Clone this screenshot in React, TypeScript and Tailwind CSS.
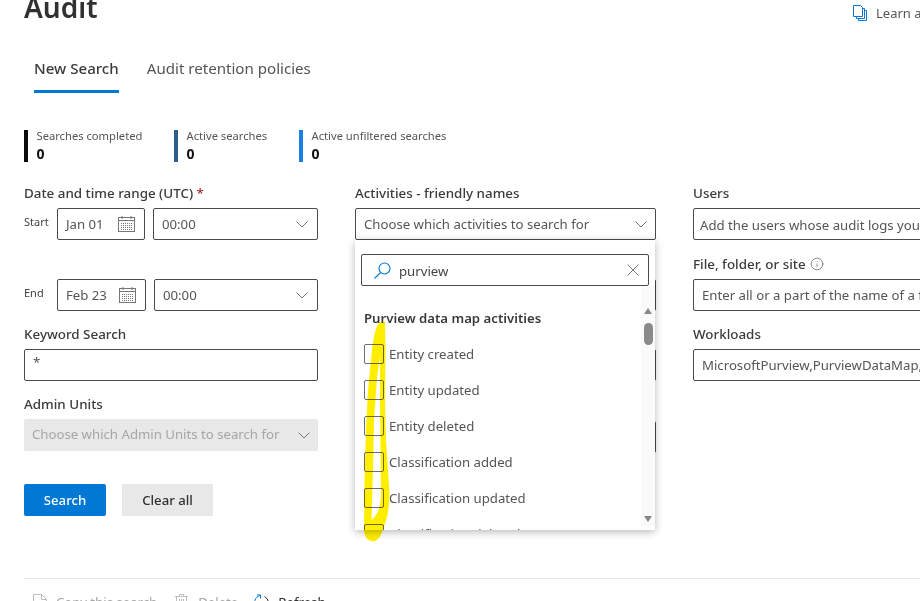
import { Info } from "lucide-react"

const FONT = "font-['Noto_Sans','Open_Sans',sans-serif]"

const ACTIVITIES = [
  "Entity created",
  "Entity updated",
  "Entity deleted",
  "Classification added",
  "Classification updated",
  "Classification deleted",
]

const STATS = [
  { label: "Searches completed", bar: "bg-[#0b0b0b]", width: "w-[150px]" },
  { label: "Active searches", bar: "bg-[#2f5d8c]", width: "w-[125px]" },
  { label: "Active unfiltered searches", bar: "bg-[#1a7fe8]", width: "w-[160px]" },
]

function Chevron() {
  return (
    <svg width="12" height="7" viewBox="0 0 12 7" fill="none" stroke="#777" strokeWidth="1" className="shrink-0">
      <path d="M0.5 0.5L6 6L11.500 0.500" />
    </svg>
  )
}

function CalendarIcon() {
  return (
    <svg width="17" height="16" viewBox="0 0 17 16" fill="none" stroke="#777" strokeWidth="1" className="shrink-0">
      <rect x="0.5" y="1.5" width="16" height="14" />
      <path d="M0.5 4.500h16M4 0v3M13 0v3" />
      <path d="M3 7.500h11M3 9.500h11M3 11.500h11M3 13.500h11" strokeDasharray="1 1" />
    </svg>
  )
}

function Field({ children, className = "" }: { children?: React.ReactNode; className?: string }) {
  return (
    <div className={`flex h-[32px] items-center rounded-[2px] border border-[#4a4a4a] bg-white text-[13.2px] text-[#555] ${className}`}>
      {children}
    </div>
  )
}

function Label({ children }: { children: React.ReactNode }) {
  return <div className="h-[24px] text-[13.4px] font-medium leading-[18px] text-[#3b3b3b]">{children}</div>
}

function DateRow({ label, date, className, dateWidth }: { label: string; date: string; className: string; dateWidth: string }) {
  return (
    <div className={`flex ${className}`}>
      <span className="w-[33px] pt-[7px] text-[11px] leading-[14px] text-[#444]">{label}</span>
      <Field className={`${dateWidth} justify-between pl-[8px] pr-[9px]`}>
        <span className="pt-[2px]">{date}</span>
        <CalendarIcon />
      </Field>
      <Field className="ml-[8px] flex-1 justify-between pl-[8px] pr-[9px]">
        <span className="pt-[2px]">00:00</span>
        <Chevron />
      </Field>
    </div>
  )
}

export default function App() {
  return (
    <div className={`relative h-[601px] w-[920px] overflow-hidden bg-white ${FONT}`}>
      <div className="flex h-[27px] items-start justify-between pl-[24px]">
        <h1 className="mt-[-14px] text-[28px] font-semibold leading-[42px] text-[#323130]">Audit</h1>
        <div className="flex w-[67px] shrink-0 items-center gap-[9px] overflow-hidden whitespace-nowrap pt-[4px] text-[13px] leading-[18px] text-[#555]">
          <svg width="14" height="16" viewBox="0 0 14 16" fill="none" stroke="#0b78d4" strokeWidth="1" className="shrink-0">
            <path d="M0.5 0.5h7l2 2v9h-9z" />
            <path d="M9.5 3.5h2v10h-8v-2" />
            <path d="M11.5 5.5h2v10h-8v-2" />
          </svg>
          Learn about audit
        </div>
      </div>

      <div className="ml-[34px] mt-[29px] flex h-[37px] gap-[28px] text-[15.1px] leading-[24px]">
        <div className="border-b-[3px] border-[#0078d4] font-medium text-[#3b3b3b]">New Search</div>
        <div className="text-[#555]">Audit retention policies</div>
      </div>

      <div className="ml-[24px] mt-[37px] flex h-[32px]">
        {STATS.map((stat) => (
          <div key={stat.label} className={`flex ${stat.width}`}>
            <div className={`w-[4px] ${stat.bar}`} />
            <div className="-mt-[1px] pl-[8.500px]">
              <div className="text-[11.2px] leading-[13px] text-[#555]">{stat.label}</div>
              <div className="mt-[4px] text-[14px] font-bold leading-[16px] text-[#111]">0</div>
            </div>
          </div>
        ))}
      </div>

      <div className="ml-[24px] mt-[22px] grid grid-cols-[294px_301px_300px] gap-x-[37px]">
        <div>
          <Label>
            Date and time range (UTC) <span className="text-[#a4262c]">*</span>
          </Label>
          <DateRow label="Start" date="Jan 01" dateWidth="w-[88px]" className="" />
          <DateRow label="End" date="Feb 23" dateWidth="w-[89px]" className="mt-[39px]" />
          <div className="mt-[14px]">
            <Label>Keyword Search</Label>
            <Field className="pl-[8px]">
              <span className="-mt-[4px]">*</span>
            </Field>
          </div>
          <div className="mt-[14px]">
            <Label>Admin Units</Label>
            <div className="flex h-[32px] items-center justify-between rounded-[2px] bg-[#e8e8e8] pl-[8px] pr-[8px] text-[13.2px] text-[#a6a6a6]">
              Choose which Admin Units to search for
              <Chevron />
            </div>
          </div>
          <div className="mt-[33px] flex gap-[16px] text-[13.2px] font-medium">
            <button className="h-[32px] w-[82px] rounded-[2px] bg-[#0078d4] pt-[2px] text-white">Search</button>
            <button className="h-[32px] w-[91px] rounded-[2px] bg-[#e8e8e8] pt-[2px] text-[#323130]">Clear all</button>
          </div>
        </div>

        <div>
          <Label>Activities - friendly names</Label>
          <Field className="justify-between pl-[8px] pr-[8px]">
            <span className="pt-[2px]">Choose which activities to search for</span>
            <Chevron />
          </Field>
          <Field className="mt-[39px]" />
          <Field className="mt-[38px]" />
          <Field className="mt-[40px]" />
        </div>

        <div>
          <Label>Users</Label>
          <Field className="whitespace-nowrap pl-[6px] pt-[3px]">Add the users whose audit logs you want to search</Field>
          <div className="mt-[15px]">
            <Label>
              <span className="flex items-center gap-[4px]">
                File, folder, or site <Info size={14} strokeWidth={1} />
              </span>
            </Label>
            <Field className="whitespace-nowrap pl-[8px] pt-[2px]">Enter all or a part of the name of a file or folder</Field>
          </div>
          <div className="mt-[14px]">
            <Label>Workloads</Label>
            <Field className="whitespace-nowrap pl-[8px] pt-[2px]">MicrosoftPurview,PurviewDataMap,AzureActiveDirectory</Field>
          </div>
        </div>
      </div>

      <div className="ml-[24px] mt-[62px] flex h-[40px] border-t border-[#e6e6e6] pl-[9px] pt-[7px] text-[13.2px] leading-[18px]">
        <span className="flex items-center gap-[9px] text-[#a6a6a6]">
          <svg width="14" height="17" viewBox="0 0 14 17" fill="none" stroke="#bdbdbd"><path d="M0.5 0.5h8l5 5v11h-13z" /><path d="M8.5 0.5v5h5" /></svg>
          Copy this search
        </span>
        <span className="ml-[18px] flex items-center gap-[10px] text-[#a6a6a6]">
          <svg width="13" height="17" viewBox="0 0 13 17" fill="none" stroke="#bdbdbd"><path d="M0 2.5h13M4.5 2.5v-2h4v2M1.5 2.5v14h10v-14M4.5 5v9M6.5 5v9M8.500 5v9" /></svg>
          Delete
        </span>
        <span className="ml-[16px] flex items-center gap-[8px] text-[#323130]">
          <svg width="16" height="16" viewBox="0 0 16 16" fill="none" stroke="#0078d4"><path d="M2.5 13A7 7 0 0 1 6 1.5M3 1h3.5v3.5" /><path d="M10.500 2.500A7 7 0 0 1 13 13" stroke="#323130" /></svg>
          Refresh
        </span>
      </div>

      {/* open activities dropdown, lies over the second column */}
      <div className="absolute left-[355px] top-[240px] h-[290px] w-[300px] overflow-hidden bg-white shadow-[0_2px_8px_rgba(0,0,0,0.28)]">
        <div className="mx-[6px] mt-[14px] flex h-[32px] w-[288px] items-center rounded-[2px] border border-[#4a4a4a] pl-[12px] pr-[9px] text-[13.2px] text-[#444]">
          <svg width="17" height="17" viewBox="0 0 17 17" fill="none" stroke="#0078d4" strokeWidth="1.100" className="shrink-0">
            <circle cx="10.500" cy="6.500" r="5.500" />
            <path d="M6.500 10.500L0.500 16.500" />
          </svg>
          <span className="ml-[8px] flex-1 pt-[4px]">purview</span>
          <svg width="12" height="12" viewBox="0 0 12 12" fill="none" stroke="#777" strokeWidth="1" className="shrink-0">
            <path d="M0.500 0.500L11.500 11.500M11.500 0.500L0.500 11.500" />
          </svg>
        </div>
        <div className="flex h-[244px]">
          <div className="flex-1 pl-[9px] pt-[23px]">
            <div className="text-[13.2px] font-semibold leading-[18px] text-[#3b3b3b]">Purview data map activities</div>
            <div className="mt-[17px] flex flex-col gap-[16px]">
              {ACTIVITIES.map((name) => (
                <div key={name} className="flex h-[20px] items-center gap-[5px] whitespace-nowrap text-[13.2px] text-[#555]">
                  <span className="h-[20px] w-[20px] shrink-0 rounded-[2px] border border-[#6e6e6e]" />
                  <span className="pt-[2px]">{name}</span>
                </div>
              ))}
            </div>
          </div>
          <div className="flex h-[240px] w-[14px] flex-col items-center bg-[#fafafa] pb-[4px] pt-[22px]">
            <span className="h-0 w-0 border-x-[4px] border-b-[6px] border-x-transparent border-b-[#888]" />
            <span className="mt-[9px] h-[22px] w-[9px] rounded-full bg-[#8a8a8a]" />
            <span className="mt-auto h-0 w-0 border-x-[4px] border-t-[6px] border-x-transparent border-t-[#888]" />
          </div>
        </div>
      </div>

      {/* marker highlight drawn on the screenshot */}
      <svg width="30" height="225" viewBox="362 320 30 225" className="absolute left-[362px] top-[320px] mix-blend-multiply">
        <path
          fillRule="evenodd"
          fill="#ffee00"
          d="M382 322C376 322 374 335 372 350L368 390L366 430L364.500 480L364 530C364 539 370 542 375 541C380 539 383 531 384 526C389 515 390 500 389 485L386 440L385 400L385.500 350L385 322Z M380 356L377 378L374 420L373 470L371.500 520C376 516 380.500 510 381 495L380.500 450L380 400Z"
        />
      </svg>
    </div>
  )
}
